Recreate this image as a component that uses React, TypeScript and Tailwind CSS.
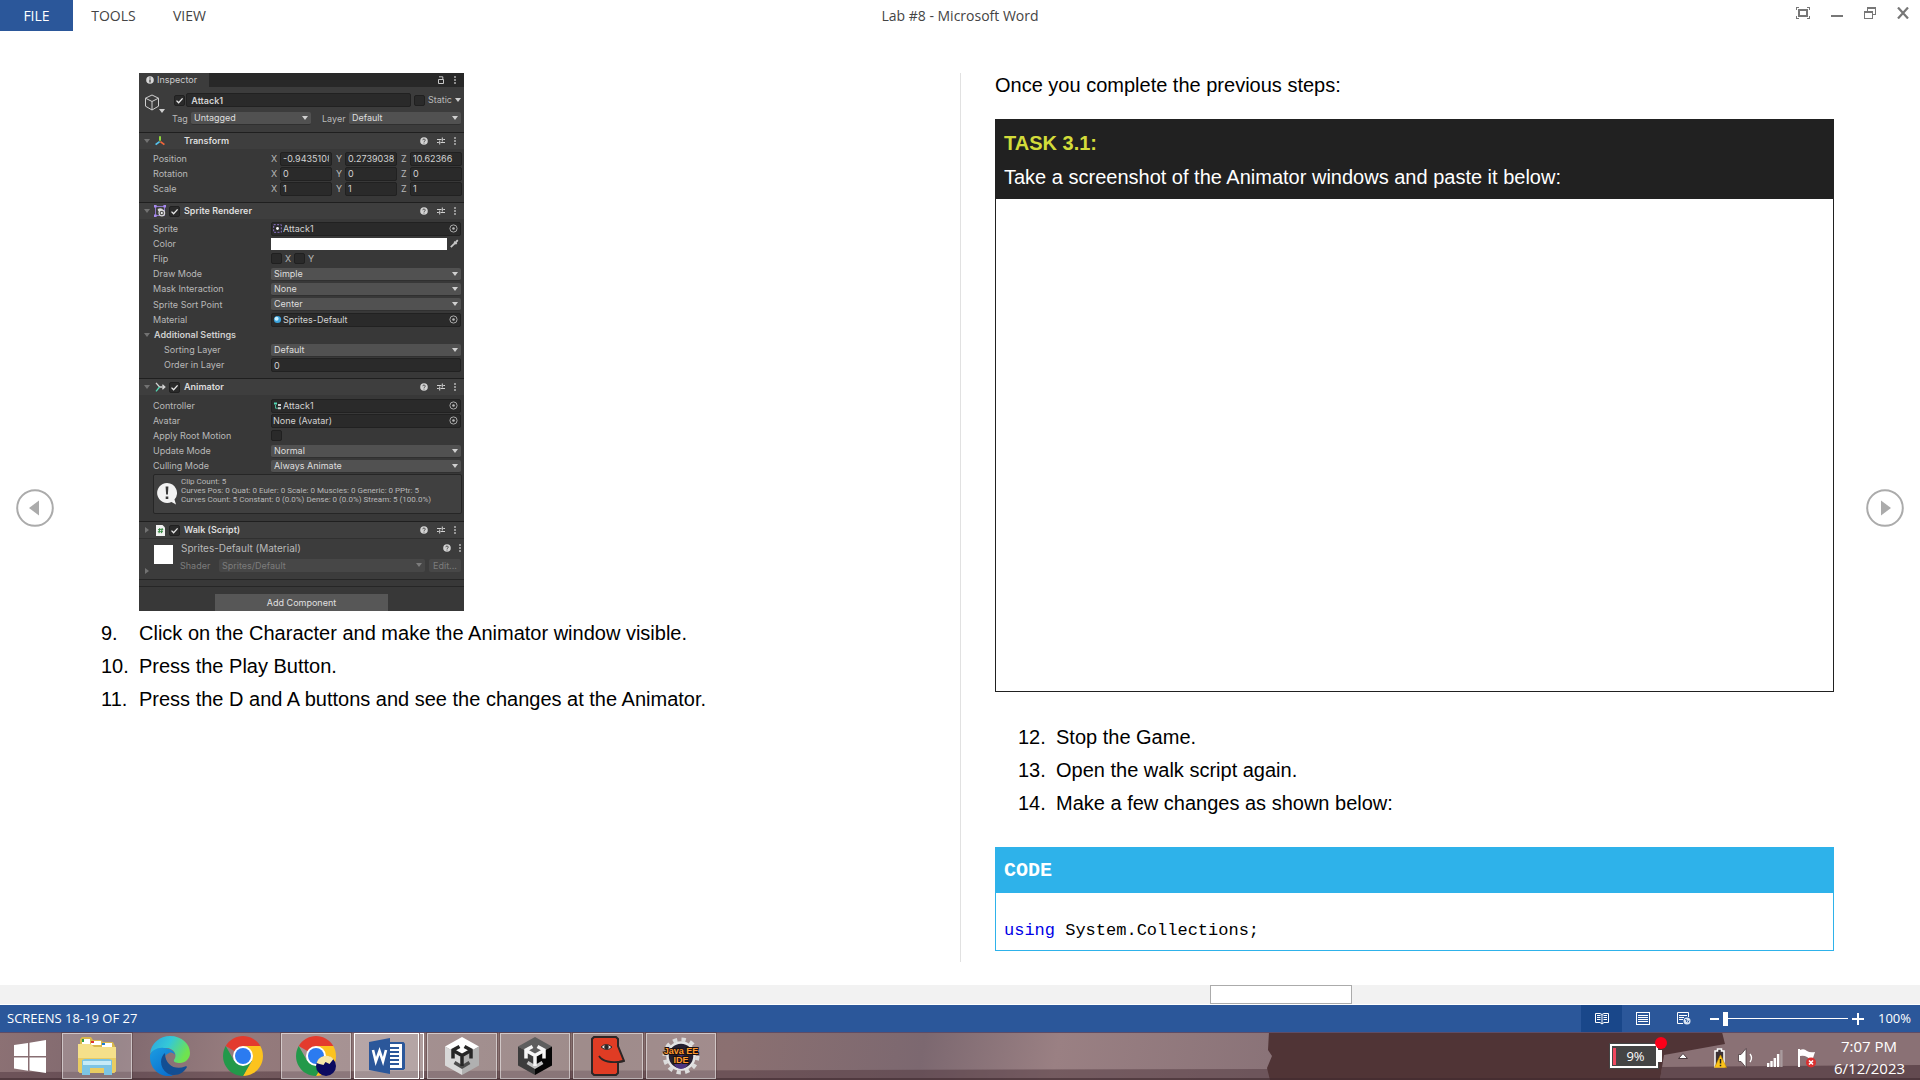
import type { ReactNode } from 'react'

type IconProps = { className?: string }

interface FieldRowProps {
  id: string
  label: string
  indent?: boolean
  children: ReactNode
}

const LEFT_STEPS = [
  { n: '9.', text: 'Click on the Character and make the Animator window visible.' },
  { n: '10.', text: 'Press the Play Button.' },
  { n: '11.', text: 'Press the D and A buttons and see the changes at the Animator.' },
]

const RIGHT_STEPS = [
  { n: '12.', text: 'Stop the Game.' },
  { n: '13.', text: 'Open the walk script again.' },
  { n: '14.', text: 'Make a few changes as shown below:' },
]

const VECTORS = [
  { label: 'Position', values: ['-0.9435108', '0.2739038', '10.62366'] },
  { label: 'Rotation', values: ['0', '0', '0'] },
  { label: 'Scale', values: ['1', '1', '1'] },
]

/* ---------- inspector icons ---------- */

function HelpIcon() {
  return (
    <svg viewBox="0 0 8 8" className="size-2">
      <circle cx="4" cy="4" r="3.8" fill="#d2d2d2" />
      <path d="M2.8 3.2a1.2 1.2 0 1 1 1.7 1.1q-.5.2-.5.8M4 5.7v.8" stroke="#3e3e3e" strokeWidth=".9" fill="none" />
    </svg>
  )
}

function PresetIcon() {
  return (
    <svg viewBox="0 0 8 8" className="size-2" stroke="#d2d2d2" fill="none">
      <path d="M0 2.500h4.500M6.200 2.500H8M5.300.5v4M0 5.500h1.800M3.500 5.500H8M2.700 3.500v4" />
    </svg>
  )
}

function DotsIcon() {
  return (
    <svg viewBox="0 0 2 8" className="h-2 w-[2px]" fill="#c8c8c8">
      <rect x=".2" y=".2" width="1.6" height="1.6" />
      <rect x=".2" y="3.2" width="1.6" height="1.6" />
      <rect x=".2" y="6.2" width="1.6" height="1.6" />
    </svg>
  )
}

function Caret({ className = '' }: IconProps) {
  return (
    <svg viewBox="0 0 6 4" className={`h-1 w-1.5 ${className}`}>
      <path d="M0 0h6L3 4z" fill="currentColor" />
    </svg>
  )
}

function PickerIcon() {
  return (
    <svg viewBox="0 0 9 9" className="size-[9px]" fill="none" stroke="#b8b8b8">
      <circle cx="4.5" cy="4.5" r="3.6" strokeWidth=".9" />
      <circle cx="4.5" cy="4.5" r="1.3" fill="#b8b8b8" stroke="none" />
    </svg>
  )
}

function TransformIcon() {
  return (
    <svg viewBox="0 0 10 10" className="size-2.5" fill="none" strokeWidth="1.8">
      <path d="M5 .3v4.5" stroke="#9bea3d" />
      <path d="M4.6 5.6.6 8.6" stroke="#55c4f0" />
      <path d="M5.4 5.6l4 3" stroke="#f2673a" />
    </svg>
  )
}

function SpriteIcon() {
  return (
    <svg viewBox="0 0 12 12" className="size-3" fill="none">
      <path d="M1.5 1.5h9v9h-9z" stroke="#8d74c9" />
      <path d="M0 0h2.6v2.6H0zM9.4 0H12v2.6H9.4zM0 9.4h2.6V12H0z" fill="#a88cf0" />
      <ellipse cx="6.2" cy="4.7" rx="2.6" ry="1.5" fill="#d8d8d8" />
      <circle cx="7.8" cy="8" r="2.8" stroke="#d8d8d8" strokeWidth="1.2" fill="#555" />
      <circle cx="7.8" cy="8" r="1" fill="#fff" />
    </svg>
  )
}

function AnimatorIcon() {
  return (
    <svg viewBox="0 0 11 10" className="h-2.5 w-[11px]" fill="none" strokeWidth="1.3">
      <path d="M1 .8 4.6 5h5M7.4 2.8 9.8 5 7.4 7.2" stroke="#d4d4d4" />
      <path d="M1 9.4 4.6 5" stroke="#52d8b4" />
    </svg>
  )
}

function ScriptIcon() {
  return (
    <svg viewBox="0 0 9 11" className="h-[11px] w-[9px]">
      <path d="M0 0h6.5L9 2.5V11H0z" fill="#f2f2f2" />
      <path d="M3.8 3 3 8.2M6.2 3l-.8 5.2M2 4.6h5.2M1.8 6.7H7" stroke="#3a8a45" strokeWidth="1" />
    </svg>
  )
}

/* ---------- inspector controls ---------- */

function Tick({ label, checked = false }: { label: string; checked?: boolean }) {
  return (
    <span className="relative block size-[11px] shrink-0">
      <input
        type="checkbox"
        aria-label={label}
        defaultChecked={checked}
        className="peer block size-[11px] appearance-none rounded-[2px] border border-[#202020] bg-[#2a2a2a]"
      />
      <svg
        viewBox="0 0 11 11"
        className="pointer-events-none absolute inset-0 hidden size-[11px] peer-checked:block"
      >
        <path d="M2.5 5.6 4.6 7.8 8.6 3.4" fill="none" stroke="#e8e8e8" strokeWidth="1.3" />
      </svg>
    </span>
  )
}

function Dropdown({ id, value, label }: { id?: string; value: string; label?: string }) {
  return (
    <span className="relative block h-[13px] min-w-0 flex-1">
      <select
        id={id}
        aria-label={label}
        className="block h-[13px] w-full appearance-none rounded-[2px] border-b border-[#303030] bg-[#515151] px-[3px] leading-3 text-[#dedede]"
      >
        <option>{value}</option>
      </select>
      <Caret className="pointer-events-none absolute top-1 right-[3px] text-[#d0d0d0]" />
    </span>
  )
}

function TextField({ id, value, label, className = '' }: { id?: string; value: string; label?: string; className?: string }) {
  return (
    <input
      id={id}
      aria-label={label}
      defaultValue={value}
      className={`h-[14px] w-full min-w-0 rounded-[2px] border border-[#212121] bg-[#2a2a2a] px-[2px] leading-3 text-[#d2d2d2] ${className}`}
    />
  )
}

function ObjectField({ id, value, icon }: { id: string; value: string; icon?: ReactNode }) {
  return (
    <span className="flex h-[14px] min-w-0 flex-1 items-center rounded-[2px] border border-[#212121] bg-[#2a2a2a] pr-[2px] pl-px">
      {icon}
      <input id={id} readOnly defaultValue={value} className="w-full min-w-0 flex-1 bg-transparent leading-3 text-[#d2d2d2]" />
      <button aria-label={`Pick ${value}`}>
        <PickerIcon />
      </button>
    </span>
  )
}

function FieldRow({ id, label, indent = false, children }: FieldRowProps) {
  return (
    <div className="flex items-center">
      <label htmlFor={id} className={`w-[118px] shrink-0 ${indent ? 'pl-[11px]' : ''}`}>
        {label}
      </label>
      {children}
    </div>
  )
}

function SectionHeader({ title, icon, tick = true, closed = false }: { title: string; icon: ReactNode; tick?: boolean; closed?: boolean }) {
  return (
    <div className="flex h-[17px] items-center border-t border-[#1f1f1f] bg-[#3e3e3e] pr-[8px] pl-[5px]">
      <Caret className={`text-[#727272] ${closed ? '-rotate-90' : ''}`} />
      <span className="ml-[3px] flex w-3.5 justify-center">{icon}</span>
      <span className="ml-[2px] flex w-[15px]">{tick && <Tick label={title} checked />}</span>
      <h3 className="flex-1 font-semibold text-[#dcdcdc]">{title}</h3>
      <span className="flex items-center gap-[9px]">
        <HelpIcon />
        <PresetIcon />
        <DotsIcon />
      </span>
    </div>
  )
}

function Inspector() {
  return (
    <section className="w-[325px] overflow-hidden bg-[#383838] font-[Inter,sans-serif] text-[9px] leading-3 text-[#b9b9b9]">
      <div className="flex h-[14px] items-center justify-between bg-[#282828] pr-[8px]">
        <div className="flex h-full w-[70px] items-center gap-[3px] bg-[#3c3c3c] pl-[7px] text-[#cccccc]">
          <svg viewBox="0 0 8 8" className="size-2">
            <circle cx="4" cy="4" r="3.8" fill="#d8d8d8" />
            <path d="M4 1.4v1.2M4 3.4v3.2" stroke="#333" strokeWidth="1.2" />
          </svg>
          Inspector
        </div>
        <span className="flex items-center gap-[10px]">
          <svg viewBox="0 0 6 8" className="h-2 w-1.5" fill="none" stroke="#c8c8c8">
            <path d="M.5 3.500h5v4h-5zM1 .800h3.800v2.700" />
          </svg>
          <DotsIcon />
        </span>
      </div>

      <div className="flex h-[45px] bg-[#3c3c3c] pt-[5px] pr-[3px] pl-[5px]">
        <div className="relative w-[28px]">
          <svg viewBox="0 0 16 17" className="mt-[2px] h-[17px] w-4" fill="none" stroke="#cfcfcf">
            <path d="M8 1l6.5 3.2v8L8 16l-6.5-3.8v-8zM1.5 4.2 8 7.5l6.5-3.3M8 7.5V16" />
          </svg>
          <Caret className="absolute top-[17px] left-[15px] text-[#cfcfcf]" />
        </div>
        <div className="flex-1">
          <div className="flex h-4 items-center">
            <span className="ml-[2px] flex w-[16px]">
              <Tick label="Active" checked />
            </span>
            <TextField label="Name" value="Attack1" className="pl-1 font-semibold" />
            <span className="ml-[3px] flex shrink-0 items-center gap-[3px]">
              <Tick label="Static" />
              Static
              <Caret className="text-[#d0d0d0]" />
            </span>
          </div>
          <div className="mt-1 flex items-center gap-[3px]">
            <label htmlFor="tag" className="w-[16px]">Tag</label>
            <Dropdown id="tag" value="Untagged" />
            <label htmlFor="layer" className="ml-[8px] w-[24px]">Layer</label>
            <span className="flex w-[112px]"><Dropdown id="layer" value="Default" /></span>
          </div>
        </div>
      </div>

      <SectionHeader title="Transform" icon={<TransformIcon />} tick={false} />
      <div className="grid h-[53px] auto-rows-[15px] pt-[2px] pr-[2px] pl-[14px]">
        {VECTORS.map(v => (
          <div key={v.label} className="flex items-center">
            <span className="w-[118px] shrink-0">{v.label}</span>
            <span className="grid flex-1 grid-cols-3 gap-[4px]">
              {['X', 'Y', 'Z'].map((axis, i) => (
                <label key={axis} className="flex items-center">
                  <span className="w-[9px] shrink-0">{axis}</span>
                  <TextField value={v.values[i]} />
                </label>
              ))}
            </span>
          </div>
        ))}
      </div>

      <SectionHeader title="Sprite Renderer" icon={<SpriteIcon />} />
      <div className="grid h-[159px] grid-rows-10 pt-[2px] pr-[3px] pb-[5px] pl-[14px]">
        <FieldRow id="sprite" label="Sprite">
          <ObjectField
            id="sprite"
            value="Attack1"
            icon={
              <svg viewBox="0 0 9 9" className="mr-px size-[9px] shrink-0" fill="none">
                <path d="M.7.7h7.6v7.6H.7z" stroke="#8d74c9" strokeDasharray="2 1.4" />
                <circle cx="4.5" cy="4.5" r="1.4" fill="#fff" />
              </svg>
            }
          />
        </FieldRow>
        <FieldRow id="color" label="Color">
          <button id="color" aria-label="Color" className="h-3 flex-1 bg-white" />
          <span className="flex w-[14px] justify-center">
            <svg viewBox="0 0 9 9" className="size-[9px]" stroke="#c8c8c8" fill="none">
              <path d="M.8 8.2 5.4 3.6" strokeWidth="1.8" />
              <path d="M4.2 2.6l2.4 2.4M6 3l1.8-1.8" strokeWidth="1.8" />
            </svg>
          </span>
        </FieldRow>
        <div className="flex items-center">
          <span className="w-[118px]">Flip</span>
          <label className="flex w-[23px] items-center gap-[3px]">
            <Tick label="Flip X" />X
          </label>
          <label className="flex items-center gap-[3px]">
            <Tick label="Flip Y" />Y
          </label>
        </div>
        <FieldRow id="draw" label="Draw Mode"><Dropdown id="draw" value="Simple" /></FieldRow>
        <FieldRow id="mask" label="Mask Interaction"><Dropdown id="mask" value="None" /></FieldRow>
        <FieldRow id="sort" label="Sprite Sort Point"><Dropdown id="sort" value="Center" /></FieldRow>
        <FieldRow id="material" label="Material">
          <ObjectField
            id="material"
            value="Sprites-Default"
            icon={
              <svg viewBox="0 0 9 9" className="mr-px size-[9px] shrink-0">
                <circle cx="4.5" cy="4.5" r="3.6" fill="#3ba3dc" />
                <circle cx="3.6" cy="3.8" r="2" fill="#c9efff" />
              </svg>
            }
          />
        </FieldRow>
        <div className="-ml-[9px] flex items-center gap-[4px] font-semibold text-[#cfcfcf]">
          <Caret className="text-[#727272]" />
          Additional Settings
        </div>
        <FieldRow id="sorting" label="Sorting Layer" indent><Dropdown id="sorting" value="Default" /></FieldRow>
        <FieldRow id="order" label="Order in Layer" indent><TextField id="order" value="0" /></FieldRow>
      </div>

      <SectionHeader title="Animator" icon={<AnimatorIcon />} />
      <div className="grid h-[79px] grid-rows-5 pt-[3px] pr-[3px] pl-[14px]">
        <FieldRow id="controller" label="Controller">
          <ObjectField
            id="controller"
            value="Attack1"
            icon={
              <svg viewBox="0 0 9 9" className="mr-px size-[9px] shrink-0">
                <path d="M1 1.5h3v2H1z" fill="#52d8b4" />
                <path d="M5 3h3v2H5zM5 6.200h3v2H5z" fill="#d0d0d0" />
                <path d="M2.500 4v3.200H5" fill="none" stroke="#52d8b4" strokeWidth=".8" />
              </svg>
            }
          />
        </FieldRow>
        <FieldRow id="avatar" label="Avatar"><ObjectField id="avatar" value="None (Avatar)" /></FieldRow>
        <div className="flex items-center">
          <span className="w-[118px]">Apply Root Motion</span>
          <Tick label="Apply Root Motion" />
        </div>
        <FieldRow id="update" label="Update Mode"><Dropdown id="update" value="Normal" /></FieldRow>
        <FieldRow id="culling" label="Culling Mode"><Dropdown id="culling" value="Always Animate" /></FieldRow>
      </div>
      <div className="mr-[2px] mb-[7px] ml-[14px] flex h-10 rounded-[2px] border border-[#262626] bg-[#404040] pl-[3px] font-[Roboto,sans-serif] text-[8px] leading-[9px]">
        <svg viewBox="0 0 20 22" className="mt-[8px] mr-[4px] h-[22px] w-5 shrink-0">
          <path d="M10 0a10 10 0 1 0 4.500 19l4.500 2.500-1.500-5A10 10 0 0 0 10 0z" fill="#f2f2f2" />
          <path d="M8.600 3.500h2.800l-.5 8H9.100zM8.700 13.500h2.600V16H8.700z" fill="#3a3a3a" />
        </svg>
        <p className="pt-[2px] whitespace-nowrap">
          Clip Count: 5<br />
          Curves Pos: 0 Quat: 0 Euler: 0 Scale: 0 Muscles: 0 Generic: 0 PPtr: 5<br />
          Curves Count: 5 Constant: 0 (0.0%) Dense: 0 (0.0%) Stream: 5 (100.0%)
        </p>
      </div>

      <SectionHeader title="Walk (Script)" icon={<ScriptIcon />} closed />
      <div className="flex h-[41px] border-t border-[#303030] bg-[#3c3c3c] pr-[3px] pl-[5px]">
        <Caret className="mt-[30px] -rotate-90 text-[#727272]" />
        <span className="mt-[6px] ml-[4px] size-[19px] bg-white" />
        <div className="ml-[7px] flex-1">
          <div className="mt-[3px] flex h-3 items-center justify-between pl-px text-[10px]">
            Sprites-Default (Material)
            <span className="flex items-center gap-[8px]">
              <HelpIcon />
              <DotsIcon />
            </span>
          </div>
          <div className="mt-[5px] flex items-center text-[#7c7c7c]">
            <label htmlFor="shader" className="w-[39px]">Shader</label>
            <span className="relative flex-1">
              <select id="shader" className="block h-[13px] w-full appearance-none rounded-[2px] bg-[#474747] px-[3px] leading-3">
                <option>Sprites/Default</option>
              </select>
              <Caret className="pointer-events-none absolute top-1 right-[3px]" />
            </span>
            <button className="ml-[4px] h-[13px] w-8 rounded-[2px] bg-[#474747]">Edit...</button>
          </div>
        </div>
      </div>
      <div className="h-[8px] border-y border-[#262626]" />
      <div className="flex justify-center pt-[7px]">
        <button className="h-[17px] w-[173px] bg-[#575757] text-[#e0e0e0]">Add Component</button>
      </div>
    </section>
  )
}

/* ---------- document ---------- */

function Steps({ steps }: { steps: { n: string; text: string }[] }) {
  return (
    <ol className="leading-[33px]">
      {steps.map(s => (
        <li key={s.n} className="flex">
          <span className="w-[38px] shrink-0">{s.n}</span>
          {s.text}
        </li>
      ))}
    </ol>
  )
}

function PageArrow({ next = false }: { next?: boolean }) {
  return (
    <button aria-label={next ? 'Next screen' : 'Previous screen'} className="shrink-0">
      <svg viewBox="0 0 38 38" className="size-[38px]">
        <circle cx="19" cy="19" r="17.800" fill="none" stroke="#ababab" strokeWidth="2" />
        <path d={next ? 'M15 11.500v15l10-7.500z' : 'M23 11.500v15l-10-7.500z'} fill="#ababab" />
      </svg>
    </button>
  )
}

function TitleBar() {
  return (
    <header className="grid h-[31px] grid-cols-[1fr_auto_1fr] items-center font-['Open_Sans',sans-serif] text-sm text-[#444]">
      <nav className="flex h-full">
        <button className="w-[73px] bg-[#2b579a] text-white">FILE</button>
        <button className="w-[81px]">TOOLS</button>
        <button className="w-[71px]">VIEW</button>
      </nav>
      <h1>Lab #8 - Microsoft Word</h1>
      <div className="flex items-center justify-end gap-[21px] pr-[11px] pb-[5px]">
        <button aria-label="Auto-hide">
          <svg viewBox="0 0 14 12" className="h-3 w-3.5" fill="none" stroke="#777" shapeRendering="crispEdges">
            <path d="M.5 3V.5H3M11 .5h2.500V3M.5 9v2.500H3M11 11.500h2.500V9" />
            <path d="M3 3h8v6H3z" strokeWidth="2" />
          </svg>
        </button>
        <button aria-label="Minimize">
          <svg viewBox="0 0 12 12" className="size-3"><path d="M0 8h12v2H0z" fill="#777" /></svg>
        </button>
        <button aria-label="Restore">
          <svg viewBox="0 0 12 12" className="size-3" fill="none" stroke="#777" shapeRendering="crispEdges">
            <path d="M3.500 4V.5h8v7H9M.5 4.500h8v7h-8zM3 1.500h9M0 5.500h9" />
          </svg>
        </button>
        <button aria-label="Close">
          <svg viewBox="0 0 12 12" className="size-3"><path d="M1 .5l10 11M11 .5l-10 11" stroke="#777" strokeWidth="2.200" /></svg>
        </button>
      </div>
    </header>
  )
}

function StatusBar() {
  return (
    <div className="flex h-[27px] items-center bg-[#2b579a] pl-[7px] font-['Open_Sans',sans-serif] text-[13px] text-white">
      <span className="flex-1">SCREENS 18-19 OF 27</span>
      <button aria-label="Read mode" className="flex h-full w-[41px] items-center justify-center bg-[#19478a]">
        <svg viewBox="0 0 14 13" className="h-[13px] w-3.5" fill="none" stroke="#fff">
          <path d="M.5 1.500H5l2 1 2-1h4.500v9H9l-2 1.500-2-1.500H.5zM7 2.500V12M2 3.500h3.500M2 5.500h3.500M2 7.500h3.500M8.500 3.500H12M8.500 5.500H12M8.500 7.500H12" />
        </svg>
      </button>
      <button aria-label="Print layout" className="flex w-[41px] justify-center">
        <svg viewBox="0 0 14 13" className="h-[13px] w-3.5" fill="none" stroke="#fff" shapeRendering="crispEdges">
          <path d="M.5.5h13v12H.5zM2 3.500h10M2 5.500h10M2 7.500h10M2 9.500h10" />
        </svg>
      </button>
      <button aria-label="Web layout" className="flex w-[41px] justify-center">
        <svg viewBox="0 0 14 13" className="h-[13px] w-3.5" fill="none" stroke="#fff">
          <path d="M6 11.500H.5V.5h11V5M2 3.500h8M2 5.500h5M2 7.500h4" />
          <circle cx="10" cy="9" r="3.500" fill="#dce6f4" stroke="none" />
          <path d="M8 7.500l2 .5-.5 2M11 10.500l1-2" stroke="#2b579a" />
        </svg>
      </button>
      <button aria-label="Zoom out" className="ml-[6px]">
        <svg viewBox="0 0 10 12" className="h-3 w-2.5"><path d="M0 5h9v2H0z" fill="#fff" /></svg>
      </button>
      <input
        type="range"
        aria-label="Zoom"
        defaultValue={0}
        className="ml-[3px] h-[14px] w-[125px] appearance-none bg-[linear-gradient(#fff,#fff)] bg-[length:100%_1px] bg-center bg-no-repeat [&::-webkit-slider-thumb]:h-[14px] [&::-webkit-slider-thumb]:w-[5px] [&::-webkit-slider-thumb]:appearance-none [&::-webkit-slider-thumb]:bg-white"
      />
      <button aria-label="Zoom in" className="ml-1">
        <svg viewBox="0 0 12 12" className="size-3"><path d="M0 5h12v2H0zM5 0h2v12H5z" fill="#fff" /></svg>
      </button>
      <span className="w-[56px] pr-[9px] text-right">100%</span>
    </div>
  )
}

/* ---------- taskbar ---------- */

function ExplorerIcon() {
  return (
    <svg viewBox="0 0 40 40" className="size-10">
      <path d="M3 3l2-2h9l2 3h8l2 2h10l2 4v25H3z" fill="#d9b84c" />
      <path d="M5 3h8v5H5z" fill="#fff" />
      <path d="M5 3h2v3H5z" fill="#2f9e44" />
      <path d="M14 5h10v4H14z" fill="#fff" />
      <path d="M14 5h3v2h-3z" fill="#e03131" />
      <path d="M25 7h10v4H25z" fill="#fff" />
      <path d="M25 7h3v2h-3z" fill="#1c7ed6" />
      <path d="M1 8h13l3 3h22v24l-2 2H3l-2-2z" fill="#f5e08a" />
      <path d="M1 22h38v13l-2 2H3l-2-2z" fill="#e9cc62" />
      <path d="M5 24l3-1h24l3 1v15H27v-7H13v7H5z" fill="#7cc4e4" />
      <path d="M6 25h28v4H6z" fill="#c5ebf8" />
    </svg>
  )
}

function EdgeIcon() {
  return (
    <svg viewBox="0 0 40 40" className="size-10">
      <defs>
        <linearGradient id="edge-top" x1="0" x2="1" y1="0" y2=".4">
          <stop offset="0" stopColor="#2ba3e0" />
          <stop offset=".5" stopColor="#34c8d8" />
          <stop offset="1" stopColor="#6fe34f" />
        </linearGradient>
        <linearGradient id="edge-left" x1="0" x2=".7" y1="0" y2="1">
          <stop offset="0" stopColor="#1b9de2" />
          <stop offset="1" stopColor="#0b6fce" />
        </linearGradient>
      </defs>
      <path d="M0 18C1 7 10 0 20 0c12 0 20 8 20 17 0 6-5 10-10 10-4 0-7-1-6-3 4-5 0-12-8-12C8 12 2 15 0 18z" fill="url(#edge-top)" />
      <path d="M0 19c2-5 8-8 14-7 7 0 11 4 11 7-1-2-4-3-6-2-5 2-7 7-5 13s7 9 9 10C9 42-1 32 0 19z" fill="url(#edge-left)" />
      <path d="M15 17c-6 5-5 15 2 20 8 5 17 0 20-6 0-1-1-1-2-.5-9 4-20-1-20-13.500z" fill="#134e93" />
    </svg>
  )
}

function ChromeIcon({ profile = false }: { profile?: boolean }) {
  return (
    <svg viewBox="0 0 40 40" className="size-10">
      <path d="M20 20 2.700 10A20 20 0 0 1 37.300 10z" fill="#e33b2e" />
      <path d="M20 10h17.300A20 20 0 0 1 20 40l8.700-15z" fill="#fcc31e" />
      <path d="M11.300 25 2.700 10A20 20 0 0 0 20 40l8.700-15z" fill="#23994a" />
      <circle cx="20" cy="20" r="10" fill="#fff" />
      <circle cx="20" cy="20" r="8" fill="#2b7bf0" />
      {profile && (
        <>
          <circle cx="30" cy="30" r="10" fill="#0b0b60" />
          <path d="M20.500 27a10 10 0 0 1 17-4l-4 5-4-2-2 3-4-1z" fill="#f6e7a8" />
        </>
      )}
    </svg>
  )
}

function WordIcon() {
  return (
    <svg viewBox="0 0 36 36" className="size-9">
      <path d="M20 4h14.500L36 5.500v25L34.500 32H20z" fill="#2b579a" />
      <path d="M20 6h13v24H20z" fill="#fff" />
      <path d="M20 10h10M20 14h10M20 18h10M20 22h10M20 26h10" stroke="#2b579a" strokeWidth="2" />
      <path d="M0 4 21 0v36L0 32z" fill="#2b579a" />
      <path d="M4 12l2.800 11.500L10.500 13l3.500 10.500L17 12" fill="none" stroke="#fff" strokeWidth="2.600" />
    </svg>
  )
}

function UnityIcon({ dark = false }: { dark?: boolean }) {
  const [top, left, right, ink, face] = dark
    ? ['#5e5e5e', '#3c3c3c', '#060606', '#f6f6f6', '#c4c4c4']
    : ['#ffffff', '#d8d8d8', '#b0b0b0', '#262626', '#4c4c4c']
  return (
    <svg viewBox="0 0 36 38" className="h-[38px] w-9">
      <path d="M18 0 35 9.500 18 19 1 9.500z" fill={top} />
      <path d="M1 9.500 18 19v19L1 28.500z" fill={left} />
      <path d="M35 9.500 18 19v19l17-9.500z" fill={right} />
      {/* three open sides of the inner cube */}
      <path d="M15.500 9.500 9 13v8.500M20.500 9.500 27 13v8.500" fill="none" stroke={ink} strokeWidth="3.500" />
      <path d="M10.500 25.500 18 30l7.500-4.500" fill="none" stroke={face} strokeWidth="3.500" />
      <path d="M10 14l8 4.500 8-4.500M18 18.500V29" fill="none" stroke={ink} strokeWidth="3.500" />
    </svg>
  )
}

function FaceIcon() {
  return (
    <svg viewBox="0 0 34 40" className="h-10 w-[34px]">
      <path d="M3 1h22l2 2v7l6 15-6 1v11l-2 2H3l-2-2V3z" fill="#e03c24" stroke="#2b2626" strokeWidth="2" />
      <path d="M8 20c3 5 12 8 25 5" fill="none" stroke="#2b2626" strokeWidth="1.800" />
      <path d="M10 11q5-5 11 0-5 5-11 0z" fill="#e8e0dc" stroke="#2b2626" />
      <circle cx="15.500" cy="11" r="2.300" fill="#2b2626" />
    </svg>
  )
}

function EclipseIcon() {
  return (
    <svg viewBox="0 0 38 38" className="size-[38px]">
      <circle cx="19" cy="19" r="16.500" fill="none" stroke="#dcdcdc" strokeWidth="4" strokeDasharray="4.320 4.320" />
      <circle cx="19" cy="19" r="13.500" fill="#241f30" stroke="#e4e4e4" strokeWidth="2.500" />
      <circle cx="19" cy="25" r="7" fill="#4c3580" />
      <g textAnchor="middle" strokeWidth="2" className="fill-[#ff9a2e] stroke-[#1a1010] font-['Liberation_Sans',sans-serif] text-[9px] font-bold [paint-order:stroke]">
        <text x="19" y="17">Java EE</text>
        <text x="19" y="26">IDE</text>
      </g>
    </svg>
  )
}

const APPS: { name: string; icon: ReactNode; open: boolean }[] = [
  { name: 'File Explorer', icon: <ExplorerIcon />, open: true },
  { name: 'Microsoft Edge', icon: <EdgeIcon />, open: false },
  { name: 'Google Chrome', icon: <ChromeIcon />, open: false },
  { name: 'Google Chrome profile', icon: <ChromeIcon profile />, open: true },
]

const MORE_APPS: { name: string; icon: ReactNode }[] = [
  { name: 'Unity Hub', icon: <UnityIcon /> },
  { name: 'Unity', icon: <UnityIcon dark /> },
  { name: 'Face', icon: <FaceIcon /> },
  { name: 'Eclipse', icon: <EclipseIcon /> },
]

const OPEN_APP = 'flex w-[70px] items-center justify-center border border-white/50 bg-white/20 outline outline-[#4a3438]/40'

function Taskbar() {
  return (
    <footer className="relative flex h-12 bg-[linear-gradient(100deg,#8c7174_0%,#7f686e_6%,#957b7d_12%,#87706f_30%,#8b7071_38%,#7c6870_48%,#9a8083_55%,#8a7378_66%)] font-['Open_Sans',sans-serif] text-white">
      <svg viewBox="0 0 1920 48" preserveAspectRatio="none" className="absolute inset-0 size-full">
        <path d="M0 40l1270-3v11H0z" fill="#563c43" opacity=".55" />
        <path d="M1722 0h198v48h-259l3-25 60-11z" fill="#8a7175" />
        <path d="M1662 35l258-2v15h-260z" fill="#634a50" />
        <path d="M1269 0h453l3 12-61 11-4 25h-390l-3-12 5-12-4-6z" fill="#503436" />
        <path d="M0 46h1920v2H0z" fill="#3f292e" opacity=".6" />
        <path d="M0 0h1920v1H0z" fill="#5e4c66" />
      </svg>
      <div className="relative flex flex-1 py-px">
        <button aria-label="Start" className="flex w-[62px] items-center pl-[14px]">
          <svg viewBox="0 0 32 33" className="h-[33px] w-8">
            <path d="M0 5l14-2v13H0zM15.500 2.800 32 0v16H15.500zM0 17.500h14v13.300L0 28.500zM15.500 17.500H32V33l-16.500-2.500z" fill="#fff" />
          </svg>
        </button>
        <div className="flex gap-[3px]">
          {APPS.map(app => (
            <button
              key={app.name}
              aria-label={app.name}
              className={app.open ? OPEN_APP : 'flex w-[70px] items-center justify-center'}
            >
              {app.icon}
            </button>
          ))}
          <span className="flex w-[70px]">
            <button aria-label="Microsoft Word" className="flex w-[65px] items-center justify-center border border-white bg-white/35">
              <WordIcon />
            </button>
            <span className="ml-px w-[4px] border border-l-0 border-white bg-white/30" />
          </span>
          {MORE_APPS.map(app => (
            <button key={app.name} aria-label={app.name} className={OPEN_APP}>
              {app.icon}
            </button>
          ))}
        </div>
      </div>

      <div className="relative flex items-center">
        <div className="relative mr-[14px] flex w-[53px] items-center">
          <span className="flex h-6 w-12 items-center border-2 border-white bg-[#444] pl-px outline outline-[#444]">
            <span className="h-[17px] w-[3px] bg-[#f0485f]" />
            <span className="flex-1 pr-px text-center text-[13px] leading-5">9%</span>
          </span>
          <span className="h-3 w-[4px] bg-white" />
          <span className="absolute -top-[7px] right-[-4px] size-3 rounded-full bg-[#fb0019]" />
        </div>
        <button aria-label="Show hidden icons" className="mr-[24px]">
          <svg viewBox="0 0 12 8" className="h-2 w-3"><path d="M1.500 6.500 6 1.500l4.500 5z" fill="#fff" stroke="#4a3a3e" /></svg>
        </button>
        <svg viewBox="0 0 14 20" className="mt-1 mr-[10px] h-5 w-3.5">
          <path d="M2 3h2.500V1h4v2H11v16H2z" fill="#3a3034" stroke="#fff" strokeWidth="1.500" />
          <path d="M7.500 7 13.500 19.500H1.500z" fill="#fcc419" stroke="#c98f00" strokeWidth=".6" />
          <path d="M7.500 11v4.500M7.500 16.800v1.400" stroke="#222" strokeWidth="1.500" />
        </svg>
        <svg viewBox="0 0 18 20" className="mt-1 mr-[12px] h-5 w-[18px]">
          <path d="M1.500 6.500H4l5-6v19l-5-6H1.500z" fill="#fff" stroke="#4a3a3e" strokeWidth=".8" />
          <path d="M13 6q3 4 0 8" fill="none" stroke="#fff" strokeWidth="1.300" />
        </svg>
        <svg viewBox="0 0 16 17" className="mt-1 mr-[14px] h-[17px] w-4">
          <path d="M0 13h2.400v4H0zM3.300 11h2.400v6H3.300zM6.600 8H9v9H6.600zM9.900 4h2.400v13H9.900z" fill="#fff" />
          <path d="M13.200 0h2.400v17h-2.400z" fill="#a89a9d" />
        </svg>
        <svg viewBox="0 0 20 20" className="mt-1 mr-[17px] size-5">
          <path d="M2 1v18" stroke="#fff" strokeWidth="2" />
          <path d="M3 2q4-2 7 1 3 2 8 1l-2 6q-4 1-6-1-3-2-7-1z" fill="#fff" />
          <circle cx="14" cy="14.500" r="5" fill="#d92f2f" />
          <path d="M12 12.500l4 4M16 12.500l-4 4" stroke="#fff" strokeWidth="1.600" />
        </svg>
        <time className="mr-4 w-[70px] pt-px text-center text-[15px] leading-[22px] whitespace-nowrap">
          7:07 PM<br />6/12/2023
        </time>
      </div>
    </footer>
  )
}

export default function App() {
  return (
    <div className="flex min-h-screen flex-col bg-white">
      <TitleBar />

      <main className="flex flex-1 items-stretch font-['Liberation_Sans',Arial,sans-serif] text-[20px] leading-7 text-black">
        <div className="flex w-[101px] shrink-0 items-center pl-[16px]">
          <PageArrow />
        </div>
        <article className="flex-1 pt-[42px]">
          <div className="pl-[38px]">
            <Inspector />
          </div>
          <div className="pt-[6px]">
            <Steps steps={LEFT_STEPS} />
          </div>
        </article>
        <div className="mt-[42px] mr-[34px] mb-[23px] w-px bg-[#e1e1e1]" />
        <article className="flex w-[839px] shrink-0 flex-col pt-[40px]">
          <p>Once you complete the previous steps:</p>
          <section className="mt-5 flex h-[573px] flex-col border border-[#212121]">
            <div className="h-[79px] bg-[#212121] px-2 pt-[6px] leading-[34px] text-white">
              <h2 className="font-bold text-[#d3dc3a]">TASK 3.1:</h2>
              <p>Take a screenshot of the Animator windows and paste it below:</p>
            </div>
          </section>
          <div className="pt-[29px] pb-[27px] pl-[23px]">
            <Steps steps={RIGHT_STEPS} />
          </div>
          <section className="border border-[#2eb2ea] font-['Liberation_Mono','Courier_New',monospace]">
            <h2 className="h-[45px] bg-[#2eb2ea] px-2 leading-[46px] font-bold text-white">CODE</h2>
            <pre className="px-2 pt-[27px] pb-[8px] font-['Liberation_Mono','Courier_New',monospace] text-[17px] leading-[22px]">
              <code className="font-['Liberation_Mono','Courier_New',monospace]">
                <span className="text-[#0000e6]">using</span> System.Collections;
              </code>
            </pre>
          </section>
        </article>
        <div className="flex w-[86px] shrink-0 items-center justify-end pr-[16px]">
          <PageArrow next />
        </div>
      </main>

      <div className="mb-px flex h-[19px] bg-[#f2f2f2]">
        <span className="w-[63%]" />
        <button aria-label="Scroll position" className="h-full w-[142px] border border-[#ababab] bg-white" />
      </div>
      <StatusBar />
      <Taskbar />
    </div>
  )
}
